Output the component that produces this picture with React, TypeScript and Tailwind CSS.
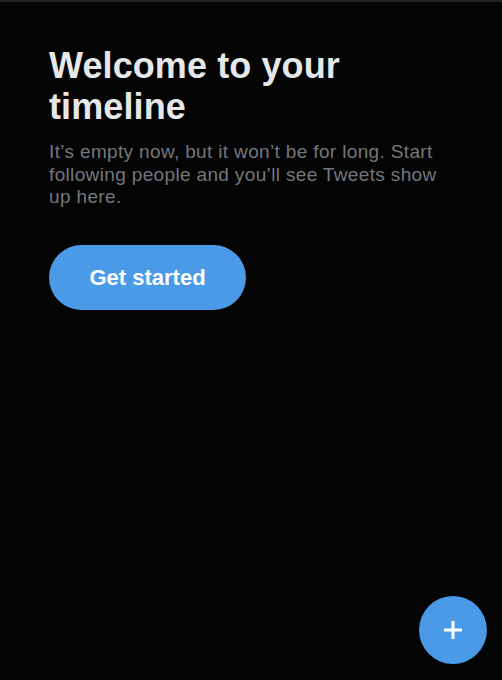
import React from "react";

export default function App() {
  return (
    <div
      className="relative w-[502px] h-[680px] overflow-hidden bg-[#040404] border-t-2 border-[#242424]"
      style={{ fontFamily: '"Liberation Sans", Arial, sans-serif' }}
    >
      <div className="flex flex-col items-start pl-[49px] pr-[40px] pt-[43px]">
        <h1 className="text-[36px] leading-[41px] font-bold text-[#e6e7e8] tracking-[0.1px]">
          Welcome to your
          <br />
          timeline
        </h1>
        <p className="mt-[14px] text-[19px] leading-[22.5px] tracking-[0.35px] text-[#73777c] w-[396px]">
          It’s empty now, but it won’t be for long. Start following people and you’ll see Tweets show up here.
        </p>
        <button className="mt-[36px] h-[65px] w-[197px] rounded-full bg-[#4b9ae8] text-white text-[22px] font-bold flex items-center justify-center">
          Get started
        </button>
      </div>
      <button className="absolute right-[15px] bottom-[16px] w-[68px] h-[68px] rounded-full bg-[#4b9ae8] flex items-center justify-center">
        <svg width="20" height="20" viewBox="0 0 20 20">
          <path d="M10 1v18M1 10h18" stroke="white" strokeWidth="3" strokeLinecap="butt" />
        </svg>
      </button>
    </div>
  );
}
